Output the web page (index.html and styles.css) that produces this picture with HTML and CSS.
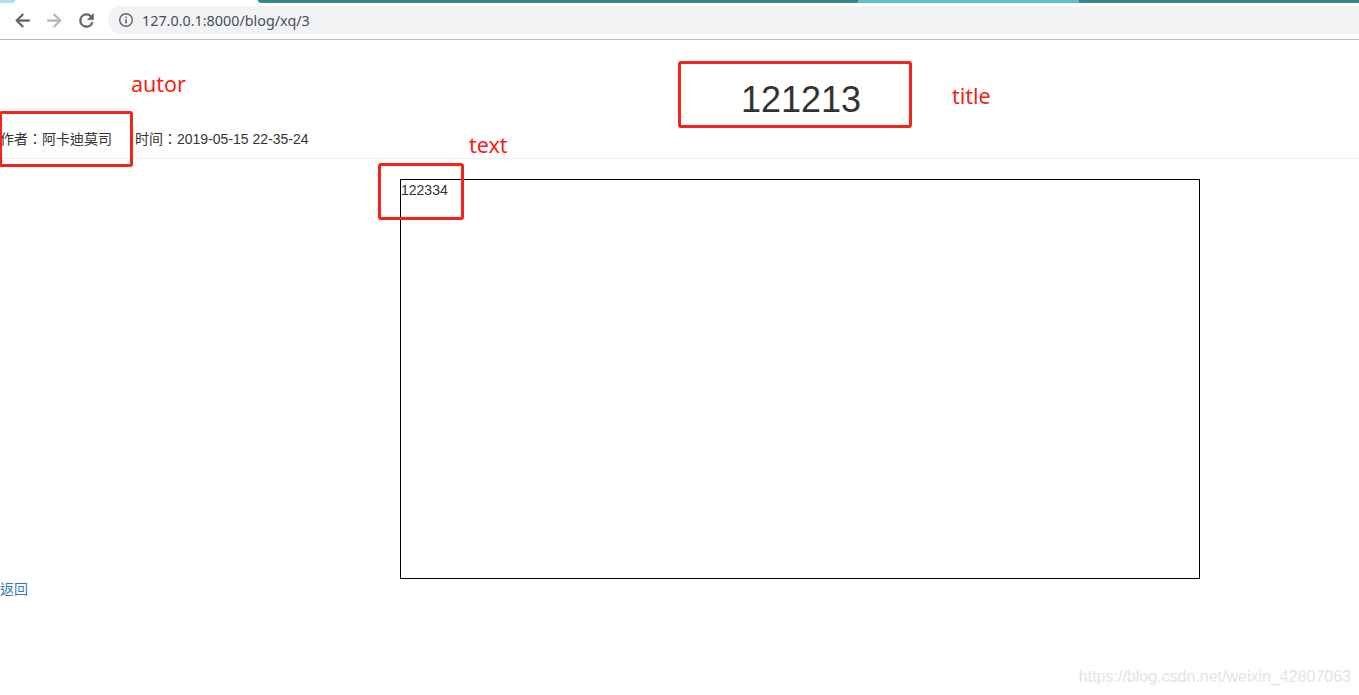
FILE: index.html
```html
<!DOCTYPE html>
<html lang="zh-TW">
<head>
<meta charset="utf-8">
<title>121213</title>
<link rel="stylesheet" href="styles.css">
</head>
<body>
<div class="tabstrip">
  <span class="seg seg-cyan"></span>
  <span class="seg seg-gap"></span>
  <span class="seg seg-dark"></span>
  <span class="seg seg-light"></span>
  <span class="seg seg-end"></span>
</div>
<div class="toolbar">
  <svg class="nav-icon" viewBox="0 0 24 24"><path fill="#5f6368" stroke="#5f6368" stroke-width=".6" d="M20 11H7.83l5.59-5.59L12 4l-8 8 8 8 1.41-1.41L7.83 13H20v-2z"/></svg>
  <svg class="nav-icon" viewBox="0 0 24 24"><path fill="#b4b6b9" stroke="#b4b6b9" stroke-width=".6" d="M4 11h12.17l-5.59-5.59L12 4l8 8-8 8-1.41-1.41L16.17 13H4v-2z"/></svg>
  <svg class="nav-icon" viewBox="0 0 24 24"><path fill="#5f6368" stroke="#5f6368" stroke-width=".6" d="M17.65 6.35A7.96 7.96 0 0 0 12 4a8 8 0 1 0 7.73 10h-2.08A6 6 0 1 1 12 6c1.66 0 3.14.69 4.22 1.78L13 11h7V4l-2.35 2.35z"/></svg>
  <div class="omnibox">
    <svg class="info-icon" viewBox="0 0 16 16"><circle cx="8" cy="8" r="6.3" fill="none" stroke="#5f6368" stroke-width="1.4"/><rect x="7.25" y="7.2" width="1.5" height="4.2" fill="#5f6368"/><rect x="7.25" y="4.6" width="1.5" height="1.5" fill="#5f6368"/></svg>
    <span class="url">127.0.0.1:8000/blog/xq/3</span>
  </div>
</div>
<main class="page">
  <h1 class="title">121213</h1>
  <div class="meta">
    <span class="author">作者：阿卡迪莫司</span>
    <span class="time">时间：2019-05-15 22-35-24</span>
  </div>
  <div class="content">122334</div>
  <a class="back" href="#">返回</a>
</main>
<div class="mark mark-author"></div>
<div class="mark mark-title"></div>
<div class="mark mark-text"></div>
<span class="note note-author">autor</span>
<span class="note note-title">title</span>
<span class="note note-text">text</span>
<span class="watermark">https://blog.csdn.net/weixin_42807063</span>
</body>
</html>
```
FILE: styles.css
```css
* { box-sizing: border-box; }
html, body { margin: 0; padding: 0; height: 100%; overflow: hidden; background: #fff; }
body { position: relative; font-family: "Liberation Sans", "Noto Sans CJK TC", sans-serif; font-size: 14px; color: #333; }

.tabstrip { display: flex; height: 3px; }
.seg { display: block; height: 3px; }
.seg-cyan { width: 15px; background: #a9e3e6; border-bottom-right-radius: 4px; }
.seg-gap { width: 243px; }
.seg-dark { width: 600px; background: linear-gradient(#2f7f86, #4a8e94); border-bottom-left-radius: 3px; }
.seg-light { width: 221px; background: #5cc0cf; }
.seg-end { flex: 1; background: linear-gradient(#2f7f86, #4a8e94); }

.toolbar { display: flex; align-items: center; height: 37px; border-bottom: 1px solid #b9b9b9; padding: 0 0 2px 12px; }
.nav-icon { width: 21px; height: 21px; margin-right: 11px; flex: none; }
.omnibox { display: flex; align-items: center; flex: 1; height: 28px; padding-left: 10px; background: #f1f3f4; border-radius: 14px 0 0 14px; }
.info-icon { width: 16px; height: 16px; margin-right: 8px; }
.url { font-family: "Noto Sans", sans-serif; font-size: 14.35px; color: #4a4f58; }

.title { margin: 0 0 0 401px; width: 800px; height: 79px; padding-top: 40px; font-size: 36px; font-weight: 400; line-height: 40px; text-align: center; }
.meta { display: flex; height: 40px; padding-top: 10px; line-height: 20px; border-bottom: 1px solid #eee; }
.author { width: 135px; flex: none; }
.content { width: 800px; height: 400px; margin: 20px 0 0 400px; border: 1px solid #000; line-height: 20px; }
.back { display: block; width: 30px; line-height: 20px; color: #337ab7; text-decoration: none; }

.mark { position: absolute; border: 3px solid #f5231a; border-radius: 3px; }
.mark-author { left: -1px; top: 111px; width: 134px; height: 56px; }
.mark-title { left: 678px; top: 61px; width: 234px; height: 67px; }
.mark-text { left: 378px; top: 163px; width: 86px; height: 57px; }

.note { position: absolute; font-family: "Noto Sans", sans-serif; font-size: 21.5px; line-height: 26px; color: #fa1e14; }
.note-author { left: 131px; top: 71px; }
.note-title { left: 952px; top: 83px; }
.note-text { left: 469px; top: 132px; }

.watermark { position: absolute; right: 8px; top: 667px; font-size: 16px; line-height: 20px; color: #e4e4e4; }
```
